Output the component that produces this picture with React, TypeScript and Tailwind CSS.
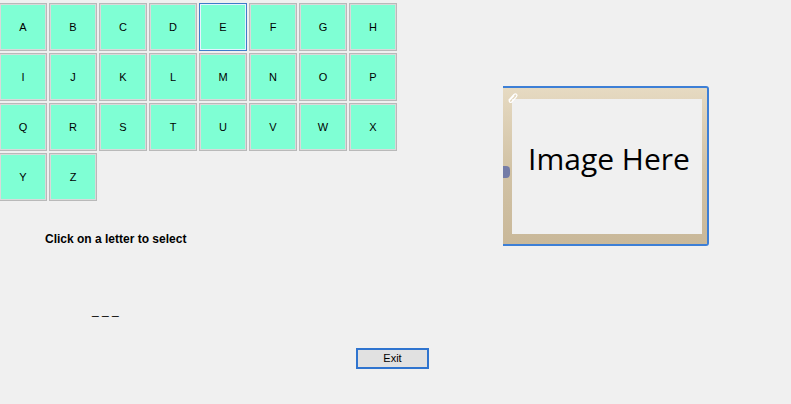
import React from "react";

const letters = "ABCDEFGHIJKLMNOPQRSTUVWXYZ".split("");

function LetterButton({ letter, focused }: { letter: string; focused?: boolean }) {
  return (
    <button
      type="button"
      className={
        focused
          ? "w-[48px] h-[48px] bg-[#7fffd4] border border-[#3f7cc8] shadow-[inset_0_0_0_1px_#e6f3ff] text-[11px] text-black flex items-center justify-center"
          : "w-[48px] h-[48px] bg-[#7fffd4] border border-[#b9b9b9] shadow-[inset_0_0_0_1px_#d9d9d9] text-[11px] text-black flex items-center justify-center"
      }
    >
      {letter}
    </button>
  );
}

function Clip() {
  return (
    <svg width="12" height="12" viewBox="0 0 12 12" className="absolute left-[4px] top-[4px]">
      <path
        d="M2 8 L7 2.5 Q8.5 1.2 9.6 2.4 Q10.6 3.6 9.3 4.8 L4.6 10 Q3.6 10.9 2.7 10 Q1.9 9.1 2.8 8.1 L6.8 3.8"
        fill="none"
        stroke="#ffffff"
        strokeWidth="1.2"
        strokeLinecap="round"
      />
    </svg>
  );
}

export default function App() {
  return (
    <div
      className="w-[791px] h-[404px] bg-[#f0f0f0] overflow-hidden flex flex-col"
      style={{ fontFamily: '"Liberation Sans", Arial, sans-serif' }}
    >
      <div className="flex">
        <div className="flex flex-col">
          <div className="grid grid-cols-[repeat(8,48px)] gap-[2px] mt-[3px] ml-[-1px]">
            {letters.map((l) => (
              <LetterButton key={l} letter={l} focused={l === "E"} />
            ))}
          </div>
          <p className="mt-[31px] ml-[45px] text-[12px] leading-[14px] font-bold text-black">
            Click on a letter to select
          </p>
          <p className="mt-[57px] ml-[92px] text-[12px] leading-[14px] text-black whitespace-pre">
            _ _ _
          </p>
        </div>

        <div className="ml-[106px] mt-[86px] w-[206px] h-[160px] border-t-2 border-r-2 border-b-2 border-[#3d7fd6] rounded-tr-[3px] rounded-br-[3px] bg-gradient-to-b from-[#e6dac2] via-[#d2c3a6] to-[#c9b899] relative pl-[9px] pt-[11px] pr-[5px] pb-[10px]">
          <Clip />
          <div className="absolute left-0 top-[78px] w-[7px] h-[12px] bg-[#5c6aa8] rounded-r-[4px] opacity-80" />
          <div className="w-full h-full bg-[#f0f0f0] flex items-center justify-center">
            <span
              className="text-[30px] leading-none text-black pb-[16px] pl-[4px]"
              style={{ fontFamily: '"Open Sans", "Noto Sans", sans-serif' }}
            >
              Image Here
            </span>
          </div>
        </div>
      </div>

      <div className="flex mt-[31px] ml-[356px]">
        <button
          type="button"
          className="w-[73px] h-[21px] bg-[#e1e1e1] border-2 border-[#2f74cf] text-[11px] text-black flex items-center justify-center"
        >
          Exit
        </button>
      </div>
    </div>
  );
}
